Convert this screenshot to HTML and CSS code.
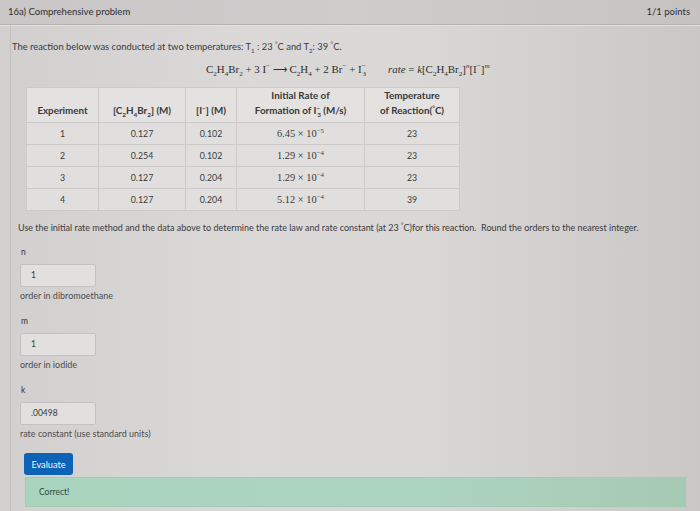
FILE: index.html
```html
<!DOCTYPE html>
<html>
<head>
<meta charset="utf-8">
<link rel="stylesheet" href="styles.css">
</head>
<body>
<div class="header">
  <span class="title">16a) Comprehensive problem</span>
  <span class="points">1/1 points</span>
</div>
<div class="main">
  <p class="intro">The reaction below was conducted at two temperatures: T<sub>1</sub> : 23 <sup>°</sup>C and T<sub>2</sub>: 39 <sup>°</sup>C.</p>
  <div class="equation">
    <span class="rxn">C<sub>2</sub>H<sub>4</sub>Br<sub>2</sub> + 3 I<sup>−</sup> <span class="arrow">⟶</span> C<sub>2</sub>H<sub>4</sub> + 2 Br<sup>−</sup> + I<sup>−</sup><sub class="under">3</sub></span>
    <span class="law"><i>rate</i> = <i>k</i>[C<sub>2</sub>H<sub>4</sub>Br<sub>2</sub>]<sup><i>n</i></sup>[I<sup>−</sup>]<sup><i>m</i></sup></span>
  </div>
  <table class="data">
    <colgroup>
      <col class="c1"><col class="c2"><col class="c3"><col class="c4"><col class="c5">
    </colgroup>
    <thead>
      <tr>
        <th>Experiment</th>
        <th>[C<sub>2</sub>H<sub>4</sub>Br<sub>2</sub>] (M)</th>
        <th>[I<sup>−</sup>] (M)</th>
        <th>Initial Rate of<br>Formation of I<sup>−</sup><sub class="under">3</sub> (M/s)</th>
        <th>Temperature<br>of Reaction(<sup>°</sup>C)</th>
      </tr>
    </thead>
    <tbody>
      <tr><td>1</td><td>0.127</td><td>0.102</td><td class="sci">6.45 × 10<sup>−5</sup></td><td>23</td></tr>
      <tr><td>2</td><td>0.254</td><td>0.102</td><td class="sci">1.29 × 10<sup>−4</sup></td><td>23</td></tr>
      <tr><td>3</td><td>0.127</td><td>0.204</td><td class="sci">1.29 × 10<sup>−4</sup></td><td>23</td></tr>
      <tr><td>4</td><td>0.127</td><td>0.204</td><td class="sci">5.12 × 10<sup>−4</sup></td><td>39</td></tr>
    </tbody>
  </table>
  <p class="instr">Use the initial rate method and the data above to determine the rate law and rate constant (at 23 <sup>°</sup>C)for this reaction.&nbsp; Round the orders to the nearest integer.</p>
  <div class="answers">
    <div class="field">
      <div class="var">n</div>
      <div class="box">1</div>
      <div class="hint">order in dibromoethane</div>
    </div>
    <div class="field">
      <div class="var">m</div>
      <div class="box">1</div>
      <div class="hint">order in iodide</div>
    </div>
    <div class="field">
      <div class="var">k</div>
      <div class="box">.00498</div>
      <div class="hint">rate constant (use standard units)</div>
    </div>
    <button class="evaluate">Evaluate</button>
    <div class="result">Correct!</div>
  </div>
</div>
</body>
</html>
```
FILE: styles.css
```css
html, body {
  margin: 0;
  padding: 0;
}
body {
  width: 700px;
  height: 511px;
  overflow: hidden;
  font-family: Lato, "Noto Sans", sans-serif;
  color: #3a3a3c;
  background: linear-gradient(90deg, #d1d0cf 0%, #dad9d7 35%, #d9d8d6 60%, #cac8c6 100%);
}
sub, sup {
  font-size: 65%;
  line-height: 0;
}
sub.under {
  margin-left: -0.45em;
}
.header {
  height: 25px;
  box-sizing: border-box;
  display: flex;
  justify-content: space-between;
  align-items: center;
  padding: 0 10px 2px 8px;
  font-size: 9.5px;
  color: #2f2f31;
  background: linear-gradient(90deg, #c8c6c6 0%, #cfcdcc 50%, #c6c3c2 100%);
  border-bottom: 1px solid #b5b3b2;
  box-shadow: 0 1px 0 #e1e0df;
}
.main {
  margin-left: 10px;
  border-left: 1px solid #c3c2c1;
  padding-left: 1px;
  height: 486px;
}
.intro {
  margin: 0;
  padding-top: 16px;
  font-size: 9.4px;
  line-height: 12px;
}
.equation {
  margin-top: 9px;
  height: 15px;
  display: flex;
  padding-left: 194px;
  gap: 22px;
  font-family: "Liberation Serif", "Times New Roman", serif;
  font-size: 10.9px;
  line-height: 15px;
  color: #2d2d2f;
}
.arrow {
  font-size: 10px;
}
.data {
  margin: 10px 0 0 14px;
  border-collapse: collapse;
  table-layout: fixed;
  width: 433px;
  background: #e0dfdd;
  font-size: 8.8px;
  color: #3a3a3c;
}
.c1 { width: 72px; }
.c2 { width: 87px; }
.c3 { width: 51px; }
.c4 { width: 128px; }
.c5 { width: 95px; }
.data th, .data td {
  border: 1px solid #cbcac8;
  text-align: center;
  padding: 0;
}
.data th {
  height: 29px;
  padding-bottom: 4px;
  vertical-align: bottom;
  font-size: 9.8px;
  font-weight: 700;
  line-height: 15px;
  background: #e3e2e0;
  color: #38383a;
}
.data td {
  height: 21px;
}
.data td.sci {
  font-family: "Liberation Serif", "Times New Roman", serif;
  font-size: 10.4px;
}
.instr {
  margin: 11px 0 0 6px;
  font-size: 9px;
  line-height: 12px;
}
.answers {
  padding-left: 8px;
  padding-top: 12px;
}
.var {
  font-size: 8.5px;
  height: 12px;
  line-height: 12px;
  padding-left: 1px;
  color: #333;
}
.box {
  margin-top: 6px;
  width: 76px;
  height: 23px;
  box-sizing: border-box;
  border: 1px solid #c3c2c0;
  border-radius: 2px;
  background: #e1e0de;
  font-size: 8.5px;
  line-height: 21px;
  padding-left: 10px;
  color: #3a3a3c;
}
.hint {
  margin-top: 3px;
  font-size: 9px;
  line-height: 12px;
  color: #4c4c4e;
  height: 12px;
}
.field {
  height: 69px;
}
.field:last-of-type {
  height: 61px;
}
.evaluate {
  display: block;
  margin-left: 4px;
  width: 49px;
  height: 22px;
  border: none;
  border-radius: 3px;
  background: #0d63b6;
  color: #f2f6fb;
  font-family: Lato, "Noto Sans", sans-serif;
  font-size: 9.2px;
  padding: 0;
}
.result {
  margin: 2px 0 0 5px;
  width: 661px;
  height: 30px;
  box-sizing: border-box;
  background: linear-gradient(90deg, #a9d4be 0%, #acd5c1 60%, #a6c9b3 100%);
  border: 1px solid #a2cbb6;
  font-size: 8.5px;
  line-height: 28px;
  padding-left: 13px;
  color: #2f4a3b;
}
```
